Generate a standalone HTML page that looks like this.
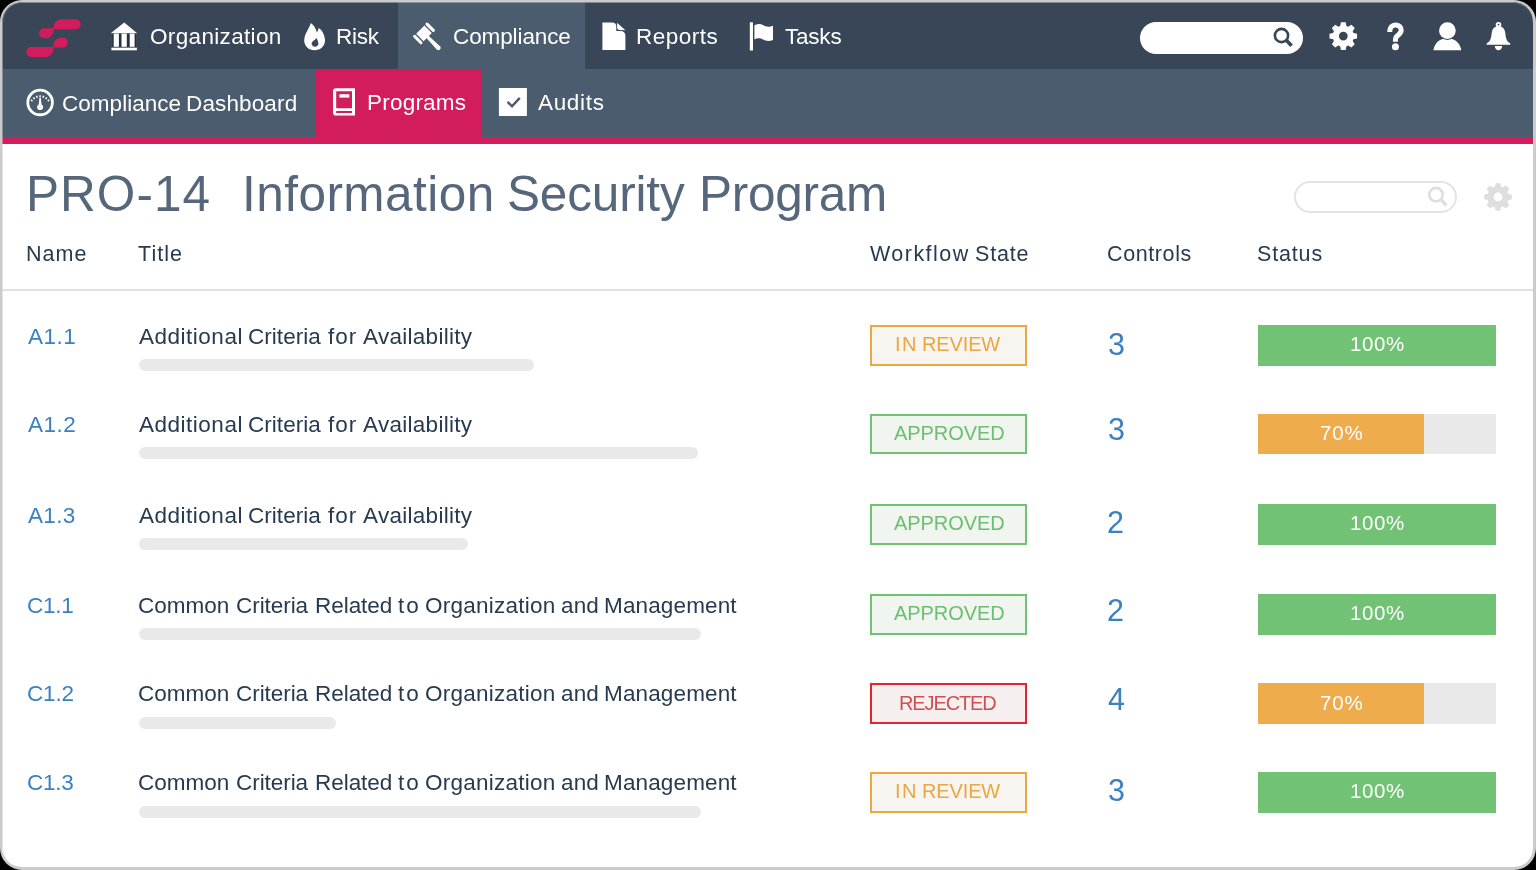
<!DOCTYPE html>
<html><head><meta charset="utf-8"><title>Information Security Program</title>
<style>
html,body{margin:0;padding:0;background:#000;width:1536px;height:870px;overflow:hidden}
.frame{position:absolute;left:0;top:0;width:1536px;height:870px;box-sizing:border-box;border:2px solid #cbcbcb;border-width:2px 3px 3px 2px;border-radius:22px;overflow:hidden;background:#fff}
.in{position:absolute;left:-2px;top:-2px;width:1536px;height:870px}
.a{position:absolute}
.t{position:absolute;font-family:'Liberation Sans',sans-serif;line-height:0;white-space:nowrap;will-change:transform}
svg{position:absolute;overflow:visible}
.bar{position:absolute;left:138.5px;height:12px;border-radius:6px;background:#e9e9e9}
.badge{position:absolute;left:870px;width:157px;box-sizing:border-box;border:2px solid}
.st{position:absolute;left:1258px;width:237.5px;background:#e9e9e9}

</style></head><body>
<div class="frame"><div class="in">
<!-- top nav -->
<div class="a" style="left:0;top:0;width:1536px;height:69px;background:#384657"></div>
<div class="a" style="left:398px;top:0;width:186.5px;height:69px;background:#4b5c6f"></div>
<!-- sub nav -->
<div class="a" style="left:0;top:69px;width:1536px;height:68px;background:#4b5c6f"></div>
<div class="a" style="left:315px;top:69px;width:166px;height:68px;background:#d31c5b"></div>
<div class="a" style="left:0;top:137px;width:1536px;height:7px;background:#d31c5b"></div>

<!-- logo -->
<svg style="left:0;top:0" width="100" height="70" viewBox="0 0 100 70"><g fill="#d31c5b">
<path d="M53.3,29.2 C53.6,22.5 56.5,19.2 62,19.2 H75.7 A5,5 0 0 1 75.7,29.2 Z"/>
<path d="M53.9,28.3 C53.6,35 50.6,38.3 45,38.3 H44 A5,5 0 0 1 44,28.3 Z"/>
<path d="M53.1,47.6 C53.4,41 56.4,37.6 62,37.6 H62.7 A5,5 0 0 1 62.7,47.6 Z"/>
<path d="M53.9,47 C53.6,53.6 50.6,56.9 45,56.9 H31.1 A4.95,4.95 0 0 1 31.1,47 Z"/>
</g></svg>

<!-- bank -->
<svg style="left:104px;top:16px" width="40" height="40" viewBox="0 0 40 40"><rect x="8.4" y="17.4" width="23.6" height="13.6" fill="#24313f"/><g fill="#fff">
<path d="M20.2,6.4 L33.2,17.2 L6.7,17.2 Z"/>
<rect x="9.7" y="17.6" width="5.2" height="13.2"/>
<rect x="17.5" y="17.6" width="5.3" height="13.2"/>
<rect x="25.7" y="17.6" width="4.9" height="13.2"/>
<rect x="7.4" y="31.7" width="25.5" height="2.6"/>
</g></svg>

<!-- flame -->
<svg style="left:296px;top:16px" width="40" height="40" viewBox="0 0 40 40">
<path fill="#fff" fill-rule="evenodd" d="M14.7,6.9 C13.8,10.5 12.2,12.5 11.2,15 C9.5,18 8.2,21 8.2,24.5 C8.2,30 12.8,34.3 18.6,34.3 C24.4,34.3 29,30 29,24.5 C29,19.5 26.5,14.5 22.75,11.9 C22.3,13.5 21.8,15 20.9,16.5 C20,12.5 17.8,9 14.7,6.9 Z M20.5,22 C21.8,24.5 22.4,26.5 22.4,27.8 C22.4,29.5 21,30.65 19,30.65 C17,30.65 15.6,29.4 15.6,27.8 C15.6,25.5 19,24.2 20.5,22 Z"/>
</svg>

<!-- gavel -->
<svg style="left:406px;top:16px" width="40" height="40" viewBox="0 0 40 40">
<g fill="#fff" transform="translate(18,17.4) rotate(-45)">
<rect x="7.2" y="-6" width="3.1" height="12" rx="1.55"/>
<rect x="-10.3" y="-6" width="3.1" height="12" rx="1.55"/>
<rect x="-5.8" y="-5.2" width="11.6" height="10.4"/>
<path d="M-1.5,3 L1.5,3 L2.3,20.3 A2.3,2.3 0 0 1 -2.3,20.3 Z"/>
</g></svg>

<!-- document -->
<svg style="left:596px;top:16px" width="40" height="40" viewBox="0 0 40 40"><g fill="#fff">
<path d="M6.4,6.4 H16.3 C18.7,6.4 20.3,8 20.3,10.4 V14.9 H24.6 C27.3,14.9 29.4,16.6 29.4,19.2 V34.1 H6.4 Z"/>
<path d="M21,6.75 L29.4,14.3 L23.3,13.9 C22,13.8 21.3,13 21.2,11.8 Z"/>
</g></svg>

<!-- flag -->
<svg style="left:742px;top:16px" width="40" height="40" viewBox="0 0 40 40"><g fill="#fff">
<rect x="7.8" y="6.2" width="3.2" height="28.3" rx="0.5"/>
<path d="M12.4,9.6 C15,7.6 18.5,7.6 21,9.1 C23.6,10.7 27.2,11.6 31,9.8 V24 C27.2,25.6 23.6,25 21,23.5 C18.5,22 15,21.6 12.4,23.5 Z"/>
</g></svg>

<!-- top search -->
<div class="a" style="left:1140px;top:22px;width:162.5px;height:31.5px;border-radius:16px;background:#fff"></div>
<svg style="left:1260px;top:20px" width="40" height="40" viewBox="0 0 40 40">
<circle cx="21.5" cy="15.5" r="6.6" fill="none" stroke="#384657" stroke-width="2.6"/>
<line x1="26.3" y1="20.3" x2="31.6" y2="25.8" stroke="#384657" stroke-width="3.6"/>
</svg>

<!-- gear -->
<svg style="left:1323px;top:16px" width="40" height="40" viewBox="0 0 40 40"><path fill="#fff" fill-rule="evenodd" d="M17.17,9.97 L17.93,6.30 L22.67,6.30 L23.43,9.97 L25.25,10.72 L28.38,8.67 L31.73,12.02 L29.68,15.15 L30.43,16.97 L34.10,17.73 L34.10,22.47 L30.43,23.23 L29.68,25.05 L31.73,28.18 L28.38,31.53 L25.25,29.48 L23.43,30.23 L22.67,33.90 L17.93,33.90 L17.17,30.23 L15.35,29.48 L12.22,31.53 L8.87,28.18 L10.92,25.05 L10.17,23.23 L6.50,22.47 L6.50,17.73 L10.17,16.97 L10.92,15.15 L8.87,12.02 L12.22,8.67 L15.35,10.72 Z M15.90,20.10 a4.4,4.4 0 1 0 8.80,0 a4.4,4.4 0 1 0 -8.80,0 Z"/></svg>
<!-- question -->
<svg style="left:1375px;top:16px" width="40" height="40" viewBox="0 0 40 40">
<path fill="none" stroke="#fff" stroke-width="5" d="M14.7,16.1 C14.7,11.3 17.3,8.9 20.45,8.9 C23.7,8.9 26.2,11.2 26.2,14.3 C26.2,17.6 23.4,18.7 21.6,20.5 C20.6,21.5 20.35,22.6 20.35,25.7"/>
<circle cx="20.45" cy="30.7" r="3.5" fill="#fff"/>
</svg>
<!-- user -->
<svg style="left:1427px;top:16px" width="40" height="40" viewBox="0 0 40 40">
<path fill="#fff" d="M6.4,34.25 C7.4,27.5 12.2,22.3 20.3,22.3 C28.4,22.3 33.2,27.5 34.25,34.25 Z"/>
<circle cx="20.4" cy="14.6" r="9.5" fill="#384657"/>
<circle cx="20.4" cy="14.6" r="8.35" fill="#fff"/>
</svg>
<!-- bell -->
<svg style="left:1478px;top:16px" width="40" height="40" viewBox="0 0 40 40"><g fill="#fff">
<circle cx="20.5" cy="8.7" r="2.8"/>
<path d="M20.5,10.3 C24.5,10.3 26.8,13 27.3,17 C27.8,22 28.5,25.5 32.2,27.3 V28.7 H8.7 V27.3 C12.5,25.5 13.2,22 13.7,17 C14.2,13 16.5,10.3 20.5,10.3 Z"/>
<path d="M16.8,29.9 H24.1 C24.1,32.3 22.5,34.25 20.45,34.25 C18.4,34.25 16.8,32.3 16.8,29.9 Z"/>
</g><circle cx="20.5" cy="8.6" r="0.9" fill="#384657"/></svg>

<!-- gauge -->
<svg style="left:20px;top:82px" width="40" height="40" viewBox="0 0 40 40">
<circle cx="20.1" cy="20.45" r="12.3" fill="none" stroke="#fff" stroke-width="2.8"/>
<g stroke="#fff" stroke-width="1.5" stroke-linecap="butt"><line x1="12.50" y1="19.07" x2="10.96" y2="17.96"/><line x1="14.57" y1="17.00" x2="13.46" y2="15.46"/><line x1="17.20" y1="15.66" x2="16.61" y2="13.85"/><line x1="20.10" y1="15.20" x2="20.10" y2="13.30"/><line x1="23.00" y1="15.66" x2="23.59" y2="13.85"/><line x1="25.63" y1="17.00" x2="26.74" y2="15.46"/><line x1="27.70" y1="19.07" x2="29.24" y2="17.96"/></g>
<path fill="#fff" d="M19.4,15.8 H20.8 L21.5,22.6 C22.6,23.2 23.1,24.1 23.1,25.2 C23.1,26.9 21.8,28.1 20.1,28.1 C18.4,28.1 17.1,26.9 17.1,25.2 C17.1,24.1 17.6,23.2 18.7,22.6 Z"/>
</svg>
<!-- book -->
<svg style="left:324px;top:82px" width="40" height="40" viewBox="0 0 40 40"><g fill="#fff">
<path fill-rule="evenodd" d="M11.6,6.2 H31 V33.6 H11.6 C10.2,33.6 9,32.4 9,31 V8.8 C9,7.4 10.2,6.2 11.6,6.2 Z M12.2,9.2 H28 V26.2 H12.2 Z M12.2,29 H28 V31 H12.2 Z"/>
<rect x="15.4" y="12.2" width="9.9" height="3.4"/>
</g></svg>
<!-- checkbox -->
<svg style="left:492px;top:82px" width="40" height="40" viewBox="0 0 40 40">
<rect x="6.9" y="6" width="28" height="28" fill="#fff"/>
<polyline points="15.6,19.8 20,24.3 27.8,15.9" fill="none" stroke="#4b5c6f" stroke-width="2.4"/>
</svg>

<!-- title search + gear -->
<div class="a" style="left:1294px;top:180.6px;width:163px;height:32px;box-sizing:border-box;border:2px solid #e3e3e3;border-radius:16px"></div>
<svg style="left:1416px;top:176px" width="40" height="40" viewBox="0 0 40 40">
<circle cx="20" cy="18.6" r="6.7" fill="none" stroke="#dedede" stroke-width="2.6"/>
<line x1="24.8" y1="23.4" x2="30.3" y2="29.3" stroke="#dedede" stroke-width="3.4"/>
</svg>
<svg style="left:1477.5px;top:176.75px" width="40" height="40" viewBox="0 0 40 40"><path fill="#dedede" fill-rule="evenodd" d="M16.87,9.87 L17.63,6.20 L22.37,6.20 L23.13,9.87 L24.95,10.62 L28.08,8.57 L31.43,11.92 L29.38,15.05 L30.13,16.87 L33.80,17.63 L33.80,22.37 L30.13,23.13 L29.38,24.95 L31.43,28.08 L28.08,31.43 L24.95,29.38 L23.13,30.13 L22.37,33.80 L17.63,33.80 L16.87,30.13 L15.05,29.38 L11.92,31.43 L8.57,28.08 L10.62,24.95 L9.87,23.13 L6.20,22.37 L6.20,17.63 L9.87,16.87 L10.62,15.05 L8.57,11.92 L11.92,8.57 L15.05,10.62 Z M15.60,20.00 a4.4,4.4 0 1 0 8.80,0 a4.4,4.4 0 1 0 -8.80,0 Z"/></svg>

<!-- header line -->
<div class="a" style="left:0;top:289px;width:1536px;height:2px;background:#e1e1e1"></div>
<div class="bar" style="top:358.50px;width:395.00px"></div>
<div class="badge" style="top:325.00px;height:40.50px;border-color:#eea73f;background:#f8f5f0"></div>
<div class="st" style="top:325.00px;height:40.50px;background:#72c275"></div>
<div class="bar" style="top:447.00px;width:559.25px"></div>
<div class="badge" style="top:413.75px;height:40.25px;border-color:#72c274;background:#f0f5ef"></div>
<div class="st" style="top:413.75px;height:40.25px"><div style="width:166.25px;height:100%;background:#eeac4c"></div></div>
<div class="bar" style="top:537.75px;width:329.00px"></div>
<div class="badge" style="top:504.25px;height:40.25px;border-color:#72c274;background:#f0f5ef"></div>
<div class="st" style="top:504.25px;height:40.25px;background:#72c275"></div>
<div class="bar" style="top:627.75px;width:562.50px"></div>
<div class="badge" style="top:593.75px;height:40.75px;border-color:#72c274;background:#f0f5ef"></div>
<div class="st" style="top:593.75px;height:40.75px;background:#72c275"></div>
<div class="bar" style="top:716.90px;width:197.10px"></div>
<div class="badge" style="top:683.00px;height:41.00px;border-color:#e2262c;background:#f5efef"></div>
<div class="st" style="top:683.00px;height:41.00px"><div style="width:166.25px;height:100%;background:#eeac4c"></div></div>
<div class="bar" style="top:805.90px;width:562.50px"></div>
<div class="badge" style="top:772.00px;height:40.60px;border-color:#eea73f;background:#f8f5f0"></div>
<div class="st" style="top:772.00px;height:40.60px;background:#72c275"></div>
<div class="t" style="left:149.60px;top:37.00px;font-size:22.5px;letter-spacing:0.340px;color:#ffffff">Organization</div>
<div class="t" style="left:336.45px;top:37.00px;font-size:22.5px;letter-spacing:-0.249px;color:#ffffff">Risk</div>
<div class="t" style="left:452.65px;top:37.00px;font-size:22.5px;letter-spacing:-0.105px;color:#ffffff">Compliance</div>
<div class="t" style="left:636.20px;top:37.00px;font-size:22.5px;letter-spacing:0.503px;color:#ffffff">Reports</div>
<div class="t" style="left:785.10px;top:37.00px;font-size:22.5px;letter-spacing:-0.216px;color:#ffffff">Tasks</div>
<div class="t" style="left:61.90px;top:104.25px;font-size:22.5px;letter-spacing:0.034px;color:#ffffff">Compliance</div>
<div class="t" style="left:186.00px;top:104.25px;font-size:22.5px;letter-spacing:0.136px;color:#ffffff">Dashboard</div>
<div class="t" style="left:366.70px;top:103.00px;font-size:22.5px;letter-spacing:0.218px;color:#ffffff">Programs</div>
<div class="t" style="left:537.75px;top:103.00px;font-size:22.5px;letter-spacing:0.673px;color:#ffffff">Audits</div>
<div class="t" style="left:26.13px;top:194.25px;font-size:49.5px;letter-spacing:1.038px;color:#56677c">PRO-14</div>
<div class="t" style="left:241.88px;top:194.25px;font-size:49.5px;letter-spacing:0.458px;color:#56677c">Information</div>
<div class="t" style="left:507.35px;top:194.25px;font-size:49.5px;letter-spacing:-0.166px;color:#56677c">Security</div>
<div class="t" style="left:698.73px;top:194.25px;font-size:49.5px;letter-spacing:-0.263px;color:#56677c">Program</div>
<div class="t" style="left:26.40px;top:254.25px;font-size:21.5px;letter-spacing:1.035px;color:#273a4f">Name</div>
<div class="t" style="left:138.10px;top:254.25px;font-size:21.5px;letter-spacing:1.047px;color:#273a4f">Title</div>
<div class="t" style="left:870.25px;top:254.25px;font-size:21.5px;letter-spacing:1.453px;color:#273a4f">Workflow</div>
<div class="t" style="left:975.30px;top:254.25px;font-size:21.5px;letter-spacing:0.789px;color:#273a4f">State</div>
<div class="t" style="left:1107.10px;top:254.25px;font-size:21.5px;letter-spacing:0.599px;color:#273a4f">Controls</div>
<div class="t" style="left:1256.85px;top:254.25px;font-size:21.5px;letter-spacing:0.840px;color:#273a4f">Status</div>
<div class="t" style="left:27.75px;top:336.50px;font-size:22.5px;letter-spacing:0.459px;color:#3b80c0">A1.1</div>
<div class="t" style="left:138.90px;top:336.50px;font-size:22.5px;letter-spacing:0.509px;color:#273a4f">Additional</div>
<div class="t" style="left:248.30px;top:336.50px;font-size:22.5px;letter-spacing:0.043px;color:#273a4f">Criteria</div>
<div class="t" style="left:327.70px;top:336.50px;font-size:22.5px;letter-spacing:0.968px;color:#273a4f">for</div>
<div class="t" style="left:362.80px;top:336.50px;font-size:22.5px;letter-spacing:0.288px;color:#273a4f">Availability</div>
<div class="t" style="left:895.10px;top:344.25px;font-size:20.0px;letter-spacing:1.443px;color:#eba640">IN</div>
<div class="t" style="left:921.50px;top:344.25px;font-size:20.0px;letter-spacing:-0.134px;color:#eba640">REVIEW</div>
<div class="t" style="left:1107.65px;top:344.00px;font-size:30.5px;letter-spacing:0.000px;color:#3b80c0">3</div>
<div class="t" style="left:1349.50px;top:344.25px;font-size:20.5px;letter-spacing:0.632px;color:#ffffff">100%</div>
<div class="t" style="left:27.75px;top:425.25px;font-size:22.5px;letter-spacing:0.493px;color:#3b80c0">A1.2</div>
<div class="t" style="left:138.90px;top:425.25px;font-size:22.5px;letter-spacing:0.509px;color:#273a4f">Additional</div>
<div class="t" style="left:248.30px;top:425.25px;font-size:22.5px;letter-spacing:0.043px;color:#273a4f">Criteria</div>
<div class="t" style="left:327.70px;top:425.25px;font-size:22.5px;letter-spacing:0.968px;color:#273a4f">for</div>
<div class="t" style="left:362.80px;top:425.25px;font-size:22.5px;letter-spacing:0.288px;color:#273a4f">Availability</div>
<div class="t" style="left:893.70px;top:432.88px;font-size:20.0px;letter-spacing:-0.071px;color:#6cbf6f">APPROVED</div>
<div class="t" style="left:1107.65px;top:428.50px;font-size:30.5px;letter-spacing:0.000px;color:#3b80c0">3</div>
<div class="t" style="left:1320.00px;top:432.88px;font-size:20.5px;letter-spacing:0.849px;color:#ffffff">70%</div>
<div class="t" style="left:27.75px;top:515.50px;font-size:22.5px;letter-spacing:0.359px;color:#3b80c0">A1.3</div>
<div class="t" style="left:138.90px;top:515.50px;font-size:22.5px;letter-spacing:0.509px;color:#273a4f">Additional</div>
<div class="t" style="left:248.30px;top:515.50px;font-size:22.5px;letter-spacing:0.043px;color:#273a4f">Criteria</div>
<div class="t" style="left:327.70px;top:515.50px;font-size:22.5px;letter-spacing:0.968px;color:#273a4f">for</div>
<div class="t" style="left:362.80px;top:515.50px;font-size:22.5px;letter-spacing:0.288px;color:#273a4f">Availability</div>
<div class="t" style="left:893.70px;top:523.38px;font-size:20.0px;letter-spacing:-0.071px;color:#6cbf6f">APPROVED</div>
<div class="t" style="left:1107.17px;top:522.25px;font-size:30.5px;letter-spacing:0.000px;color:#3b80c0">2</div>
<div class="t" style="left:1349.50px;top:523.38px;font-size:20.5px;letter-spacing:0.632px;color:#ffffff">100%</div>
<div class="t" style="left:27.10px;top:605.50px;font-size:22.5px;letter-spacing:-0.288px;color:#3b80c0">C1.1</div>
<div class="t" style="left:138.30px;top:605.50px;font-size:22.5px;letter-spacing:0.008px;color:#273a4f">Common</div>
<div class="t" style="left:235.70px;top:605.50px;font-size:22.5px;letter-spacing:-0.057px;color:#273a4f">Criteria</div>
<div class="t" style="left:315.20px;top:605.50px;font-size:22.5px;letter-spacing:-0.040px;color:#273a4f">Related</div>
<div class="t" style="left:398.20px;top:605.50px;font-size:22.5px;letter-spacing:1.949px;color:#273a4f">to</div>
<div class="t" style="left:424.80px;top:605.50px;font-size:22.5px;letter-spacing:0.240px;color:#273a4f">Organization</div>
<div class="t" style="left:560.80px;top:605.50px;font-size:22.5px;letter-spacing:0.137px;color:#273a4f">and</div>
<div class="t" style="left:604.00px;top:605.50px;font-size:22.5px;letter-spacing:0.136px;color:#273a4f">Management</div>
<div class="t" style="left:893.70px;top:613.12px;font-size:20.0px;letter-spacing:-0.071px;color:#6cbf6f">APPROVED</div>
<div class="t" style="left:1107.17px;top:609.75px;font-size:30.5px;letter-spacing:0.000px;color:#3b80c0">2</div>
<div class="t" style="left:1349.50px;top:613.12px;font-size:20.5px;letter-spacing:0.632px;color:#ffffff">100%</div>
<div class="t" style="left:27.10px;top:694.25px;font-size:22.5px;letter-spacing:-0.138px;color:#3b80c0">C1.2</div>
<div class="t" style="left:138.30px;top:694.25px;font-size:22.5px;letter-spacing:0.008px;color:#273a4f">Common</div>
<div class="t" style="left:235.70px;top:694.25px;font-size:22.5px;letter-spacing:-0.057px;color:#273a4f">Criteria</div>
<div class="t" style="left:315.20px;top:694.25px;font-size:22.5px;letter-spacing:-0.040px;color:#273a4f">Related</div>
<div class="t" style="left:398.20px;top:694.25px;font-size:22.5px;letter-spacing:1.949px;color:#273a4f">to</div>
<div class="t" style="left:424.80px;top:694.25px;font-size:22.5px;letter-spacing:0.240px;color:#273a4f">Organization</div>
<div class="t" style="left:560.80px;top:694.25px;font-size:22.5px;letter-spacing:0.137px;color:#273a4f">and</div>
<div class="t" style="left:604.00px;top:694.25px;font-size:22.5px;letter-spacing:0.136px;color:#273a4f">Management</div>
<div class="t" style="left:899.20px;top:702.50px;font-size:20.0px;letter-spacing:-1.118px;color:#d14f50">REJECTED</div>
<div class="t" style="left:1108.12px;top:699.00px;font-size:30.5px;letter-spacing:0.000px;color:#3b80c0">4</div>
<div class="t" style="left:1320.00px;top:702.50px;font-size:20.5px;letter-spacing:0.849px;color:#ffffff">70%</div>
<div class="t" style="left:27.10px;top:783.25px;font-size:22.5px;letter-spacing:-0.271px;color:#3b80c0">C1.3</div>
<div class="t" style="left:138.30px;top:783.25px;font-size:22.5px;letter-spacing:0.008px;color:#273a4f">Common</div>
<div class="t" style="left:235.70px;top:783.25px;font-size:22.5px;letter-spacing:-0.057px;color:#273a4f">Criteria</div>
<div class="t" style="left:315.20px;top:783.25px;font-size:22.5px;letter-spacing:-0.040px;color:#273a4f">Related</div>
<div class="t" style="left:398.20px;top:783.25px;font-size:22.5px;letter-spacing:1.949px;color:#273a4f">to</div>
<div class="t" style="left:424.80px;top:783.25px;font-size:22.5px;letter-spacing:0.240px;color:#273a4f">Organization</div>
<div class="t" style="left:560.80px;top:783.25px;font-size:22.5px;letter-spacing:0.137px;color:#273a4f">and</div>
<div class="t" style="left:604.00px;top:783.25px;font-size:22.5px;letter-spacing:0.136px;color:#273a4f">Management</div>
<div class="t" style="left:895.10px;top:791.30px;font-size:20.0px;letter-spacing:1.443px;color:#eba640">IN</div>
<div class="t" style="left:921.50px;top:791.30px;font-size:20.0px;letter-spacing:-0.134px;color:#eba640">REVIEW</div>
<div class="t" style="left:1107.65px;top:790.20px;font-size:30.5px;letter-spacing:0.000px;color:#3b80c0">3</div>
<div class="t" style="left:1349.50px;top:791.30px;font-size:20.5px;letter-spacing:0.632px;color:#ffffff">100%</div>
<div class="a" style="left:2px;top:2px;width:1531px;height:865px;box-sizing:border-box;border-style:solid;border-color:rgba(203,203,203,0.5);border-width:1px 0 0 1px;border-radius:20px"></div>
</div></div>
</body></html>
